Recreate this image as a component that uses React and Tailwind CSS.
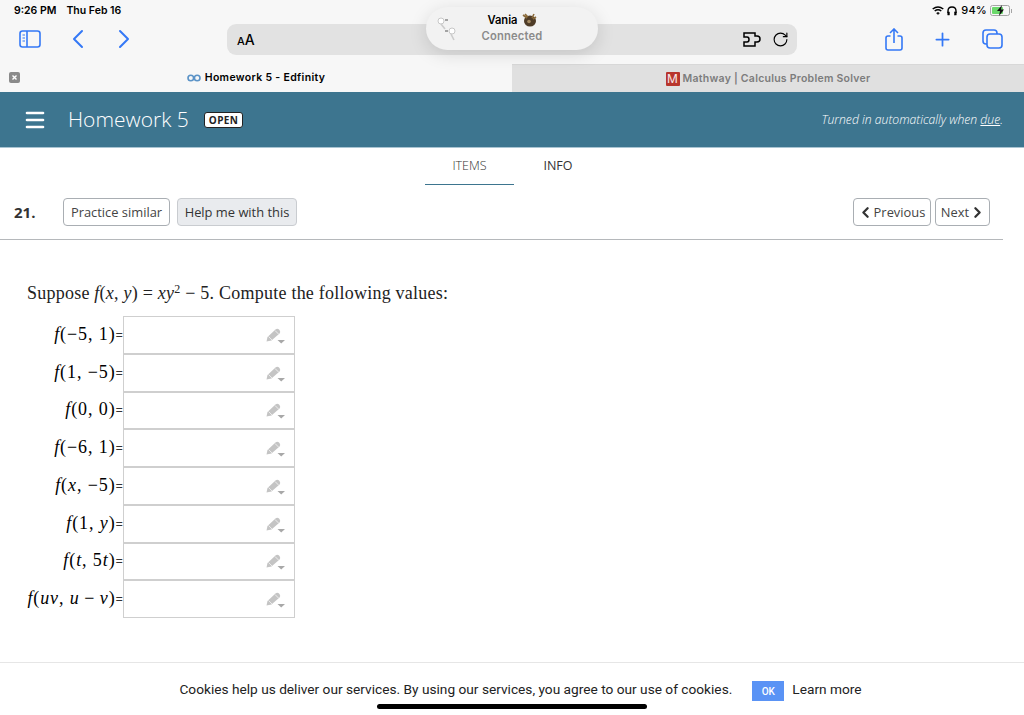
import { ChevronLeft, ChevronRight, Plus, RotateCw, Menu } from 'lucide-react'

const answers = [
  [<i key="f">f</i>, '(−5, 1)'],
  [<i key="f">f</i>, '(1, −5)'],
  [<i key="f">f</i>, '(0, 0)'],
  [<i key="f">f</i>, '(−6, 1)'],
  [<i key="f">f</i>, '(', <i key="x">x</i>, ', −5)'],
  [<i key="f">f</i>, '(1, ', <i key="y">y</i>, ')'],
  [<i key="f">f</i>, '(', <i key="t">t</i>, ', 5', <i key="t2">t</i>, ')'],
  [<i key="f">f</i>, '(', <i key="uv">uv</i>, ', ', <i key="u">u</i>, '\u2009−\u2009', <i key="v">v</i>, ')'],
]

function PencilIcon() {
  return (
    <svg width="20" height="16" viewBox="0 0 20 16">
      <path d="M0.5 13.5 L1.5 9 L9.5 1.5 Q11.5 0 13.5 2 Q15 4 13.5 5.5 L5.5 12.5 Z" fill="#c4c4c4" />
      <path d="M2.5 8.5 L6 12 M9 2.5 L12.5 6" stroke="#efefef" strokeWidth="0.9" />
      <path d="M11.5 12 H19 L15.2 15.5 Z" fill="#a8a8a8" />
    </svg>
  )
}

function SidebarIcon() {
  return (
    <svg width="22" height="18" viewBox="0 0 22 18" fill="none" stroke="#3478f6" strokeWidth="1.6">
      <rect x="1" y="1" width="20" height="16" rx="2.5" />
      <path d="M8 1 V17" />
      <path d="M3.5 5 H6 M3.5 8 H6 M3.5 11 H6" strokeWidth="1.2" />
    </svg>
  )
}

function ShareIcon() {
  return (
    <svg width="18" height="23" viewBox="0 0 18 23" fill="none" stroke="#3478f6" strokeWidth="1.6">
      <path d="M5.5 8 H3 Q1 8 1 10 V20 Q1 22 3 22 H15 Q17 22 17 20 V10 Q17 8 15 8 H12.5" />
      <path d="M9 15 V1.5 M5 5 L9 1 L13 5" />
    </svg>
  )
}

function TabsIcon() {
  return (
    <svg width="21" height="20" viewBox="0 0 21 20" fill="none" stroke="#3478f6" strokeWidth="1.6">
      <rect x="5" y="5" width="15" height="14" rx="3" />
      <path d="M5 15 H4 Q1 15 1 12 V4 Q1 1 4 1 H12 Q15 1 15 4 V5" />
    </svg>
  )
}

function ExtensionIcon() {
  return (
    <svg width="18" height="15" viewBox="0 0 18 15" fill="none" stroke="#000" strokeWidth="1.5">
      <path d="M1 1 H12 V4 H14 Q17 4 17 7 Q17 10 14 10 H12 V14 H1 V10 H4 Q6 10 6 7.5 Q6 5 4 5 H1 Z" />
    </svg>
  )
}

function AirPods() {
  return (
    <svg width="20" height="26" viewBox="0 0 20 26" fill="none">
      <circle cx="4" cy="5" r="3" fill="#fff" stroke="#bbb" strokeWidth="0.8" />
      <path d="M4 8 L8 13" stroke="#ccc" strokeWidth="1.6" />
      <path d="M8 4 H11" stroke="#555" strokeWidth="1" />
      <circle cx="15" cy="15" r="3" fill="#fff" stroke="#bbb" strokeWidth="0.8" />
      <path d="M14 18 L17 24" stroke="#ccc" strokeWidth="1.6" />
      <path d="M8 15 H11" stroke="#555" strokeWidth="1" />
    </svg>
  )
}

function Sloth() {
  return (
    <svg width="15" height="14" viewBox="0 0 15 14">
      <ellipse cx="8" cy="8" rx="6" ry="5.5" fill="#4f3c28" />
      <path d="M1 2 L5 5 M12 1 L10 5 M14 4 L11 6 M3 1 L6 4" stroke="#8a6a3a" strokeWidth="1.6" />
      <circle cx="7" cy="8.5" r="1.8" fill="#a58a62" />
    </svg>
  )
}

function Battery() {
  return (
    <div className="flex items-center gap-[1px]">
      <div className="relative w-[20px] h-[11px] rounded-[2.5px] border border-[#a5a5a5] p-[1px]">
        <div className="w-[11px] h-full rounded-[1px] bg-[#6bd96b]" />
        <svg width="9" height="11" viewBox="0 0 9 11" className="absolute left-[5px] top-[-1px]">
          <path d="M6 0 L1 6 H4 L3 11 L8 4.5 H5 Z" fill="#111" />
        </svg>
      </div>
      <div className="w-[1px] h-[4px] bg-[#a5a5a5]" />
    </div>
  )
}

function WifiIcon() {
  return (
    <svg width="12" height="9" viewBox="0 0 12 9" fill="none" stroke="#000">
      <path d="M0.7 3 Q6 -1.2 11.3 3" strokeWidth="1.5" />
      <path d="M2.7 5 Q6 2.4 9.3 5" strokeWidth="1.5" />
      <path d="M4.6 7 L6 8.5 L7.4 7 Q6 6 4.6 7 Z" fill="#000" strokeWidth="0.6" />
    </svg>
  )
}

function Headphones() {
  return (
    <svg width="10" height="10" viewBox="0 0 10 10" fill="none" stroke="#000" strokeWidth="1.4">
      <path d="M1 7 V5 Q1 1 5 1 Q9 1 9 5 V7" />
      <rect x="0.8" y="6" width="1.6" height="3" fill="#000" strokeWidth="0.5" />
      <rect x="7.6" y="6" width="1.6" height="3" fill="#000" strokeWidth="0.5" />
    </svg>
  )
}

export default function App() {
  return (
    <div className="relative h-[715px] w-[1024px] overflow-hidden bg-white flex flex-col font-['Open_Sans',sans-serif] text-[#333]">
      {/* status bar */}
      <div className="h-[20px] shrink-0 bg-[#f7f7f7] flex items-center justify-between pl-[14px] pr-[12px] pt-[1px] font-['Inter',sans-serif] text-[10.5px] font-semibold text-black">
        <div className="flex gap-[10px]">
          <span>9:26 PM</span>
          <span>Thu Feb 16</span>
        </div>
        <div className="flex items-center gap-[3px]">
          <WifiIcon />
          <Headphones />
          <span className="ml-[1px] text-[11px] font-medium tracking-[0.2px]">94%</span>
          <Battery />
        </div>
      </div>

      {/* toolbar */}
      <div className="h-[44px] shrink-0 bg-[#f7f7f7] flex items-center pb-[6px]">
        <div className="w-[227px] shrink-0 flex items-center pl-[19px]">
          <SidebarIcon />
          <ChevronLeft size={32} strokeWidth={1.5} className="ml-[21px] text-[#3478f6]" />
          <ChevronRight size={32} strokeWidth={1.5} className="ml-[14px] text-[#3478f6]" />
        </div>
        <div className="w-[570px] h-[31px] shrink-0 rounded-[9px] bg-[#e2e2e2] flex items-center justify-between pl-[10px] pr-[8px]">
          <span className="font-['Inter',sans-serif] font-medium text-black leading-none">
            <span className="text-[11px]">A</span>
            <span className="text-[14px]">A</span>
          </span>
          <div className="flex items-center gap-[11px]">
            <ExtensionIcon />
            <RotateCw size={17} strokeWidth={1.6} className="text-black" />
          </div>
        </div>
        <div className="flex-1 flex items-center pl-[88px]">
          <ShareIcon />
          <Plus size={21} strokeWidth={2} className="ml-[29px] text-[#3478f6]" />
          <div className="ml-[29px] flex"><TabsIcon /></div>
        </div>
      </div>

      {/* browser tabs */}
      <div className="h-[28px] shrink-0 flex font-['Inter',sans-serif] text-[10.5px] font-semibold">
        <div className="relative w-[512px] bg-[#f7f7f7] flex items-center justify-center tracking-[0.33px] text-black">
          <div className="absolute left-[9px] top-[8px] w-[11px] h-[11px] rounded-[2px] bg-[#8a8a8a] flex items-center justify-center">
            <svg width="7" height="7" viewBox="0 0 7 7" stroke="#fff" strokeWidth="1.4">
              <path d="M1.5 1.5 L5.5 5.5 M5.5 1.5 L1.5 5.5" />
            </svg>
          </div>
          <svg width="14" height="8" viewBox="0 0 14 8" fill="none" stroke="#5b93c7" strokeWidth="1.6" className="mr-[4px]">
            <circle cx="3.8" cy="4" r="2.8" />
            <circle cx="10.2" cy="4" r="2.8" />
          </svg>
          Homework 5 - Edfinity
        </div>
        <div className="w-[512px] bg-[#e0e0e0] border-t border-[#d8d8d8] flex items-center justify-center tracking-[0.25px] text-[#7c7c7c]">
          <div className="w-[14px] h-[14px] mr-[3px] rounded-[1px] bg-[#b8352c] flex items-center justify-center text-[12px] font-normal leading-none text-white/90">M</div>
          Mathway | Calculus Problem Solver
        </div>
      </div>

      {/* page header */}
      <div className="h-[56px] shrink-0 bg-[#3d758f] border-b border-[#a9c4d2] flex items-center justify-between pl-[23px] pr-[21px] text-white">
        <div className="flex items-center">
          <Menu size={24} strokeWidth={2.6} />
          <span className="ml-[21px] text-[21px] font-light">Homework 5</span>
          <span className="ml-[15px] px-[4px] h-[16px] flex items-center bg-white border border-[#222] rounded-[3px] text-[10px] font-bold leading-none tracking-[0.4px] text-[#222]">OPEN</span>
        </div>
        <span className="pt-[1px] text-[12.2px] font-light italic">
          Turned in automatically when <span className="underline">due</span>.
        </span>
      </div>

      {/* items / info */}
      <div className="h-[37px] shrink-0 flex justify-center text-[12.5px] text-[#333]">
        <div className="w-[89px] ml-[3px] flex items-center justify-center border-b border-[#3d758f] font-light">ITEMS</div>
        <div className="w-[88px] flex items-center justify-center font-normal">INFO</div>
      </div>

      {/* question header */}
      <div className="w-[1003px] h-[55px] shrink-0 border-b border-[#b5b8bb] flex items-start justify-between pl-[14px] pr-[13px] pt-[13px]">
        <div className="flex items-center gap-[7px]">
          <span className="w-[42px] text-[15px] font-bold text-[#333]">21.</span>
          <button className="h-[28px] w-[107px] pt-[1px] rounded-[4px] border border-[#a9aeb3] text-[12.9px] text-[#444]">Practice similar</button>
          <button className="h-[28px] w-[120px] pt-[1px] rounded-[4px] border border-[#c9ccd0] bg-[#e9ebee] text-[12.9px] text-[#333]">Help me with this</button>
        </div>
        <div className="flex items-center gap-[4px]">
          <button className="h-[28px] w-[78px] pt-[1px] rounded-[4px] border border-[#a9aeb3] flex items-center justify-center gap-[1px] text-[12.9px] text-[#444]">
            <ChevronLeft size={17} strokeWidth={3.2} className="-ml-[2px] -mr-[1px] text-[#333]" />
            Previous
          </button>
          <button className="h-[28px] w-[55px] pt-[1px] rounded-[4px] border border-[#a9aeb3] flex items-center justify-center gap-[1px] text-[12.9px] text-[#444]">
            Next
            <ChevronRight size={17} strokeWidth={3.2} className="-mr-[2px] -ml-[1px] text-[#333]" />
          </button>
        </div>
      </div>

      {/* question body */}
      <div className="flex-1 pl-[27px] pt-[41px] font-['Liberation_Serif',serif] text-black">
        <p className="h-[35px] text-[18px] leading-[24px] tracking-[0.23px] text-[#222]">
          Suppose <i>f</i>(<i>x</i>, <i>y</i>) = <i>xy</i><sup className="text-[12px]">2</sup> − 5. Compute the following values:
        </p>
        <div className="-ml-[27px] flex flex-col">
          {answers.map((label, i) => (
            <div key={i} className="h-[37.75px] flex items-center">
              <div className="w-[123px] text-right text-[18px] leading-none tracking-[0.9px] pb-[2px]">
                {label}<span className="font-['Open_Sans',sans-serif] text-[13px] tracking-normal text-[#333]">=</span>
              </div>
              <div className="w-[172px] h-[37.75px] border border-[#cfcfcf] flex items-center justify-end pr-[8px] pt-[2px]">
                <PencilIcon />
              </div>
            </div>
          ))}
        </div>
      </div>

      {/* cookie notice */}
      <div className="h-[53px] shrink-0 border-t border-[#e6e6e6] flex items-start justify-center pt-[16px] pl-[17px] font-['Roboto',sans-serif] text-[13.7px] text-[#222]">
        <span>Cookies help us deliver our services. By using our services, you agree to our use of cookies.</span>
        <button className="ml-[20px] mt-[2px] w-[32px] h-[20px] bg-[#5a93f5] text-[10px] font-medium text-white">OK</button>
        <span className="ml-[8px]">Learn more</span>
      </div>

      {/* airpods banner */}
      <div className="absolute left-[426px] top-[7px] w-[172px] h-[43px] rounded-[22px] bg-[#f2f2f2] shadow-[0_4px_18px_rgba(0,0,0,0.13)] flex items-center justify-center font-['Inter',sans-serif] text-[11.2px] font-semibold">
        <div className="absolute left-[11px] top-[9px]"><AirPods /></div>
        <div className="flex flex-col items-center leading-[16px] -mt-[2px]">
          <div className="flex items-center gap-[4px] text-black">Vania <Sloth /></div>
          <div className="text-[#8b8b8b] tracking-[0.2px]">Connected</div>
        </div>
      </div>

      {/* home indicator */}
      <div className="absolute left-[377px] top-[704px] w-[270px] h-[5px] rounded-full bg-black" />
    </div>
  )
}
